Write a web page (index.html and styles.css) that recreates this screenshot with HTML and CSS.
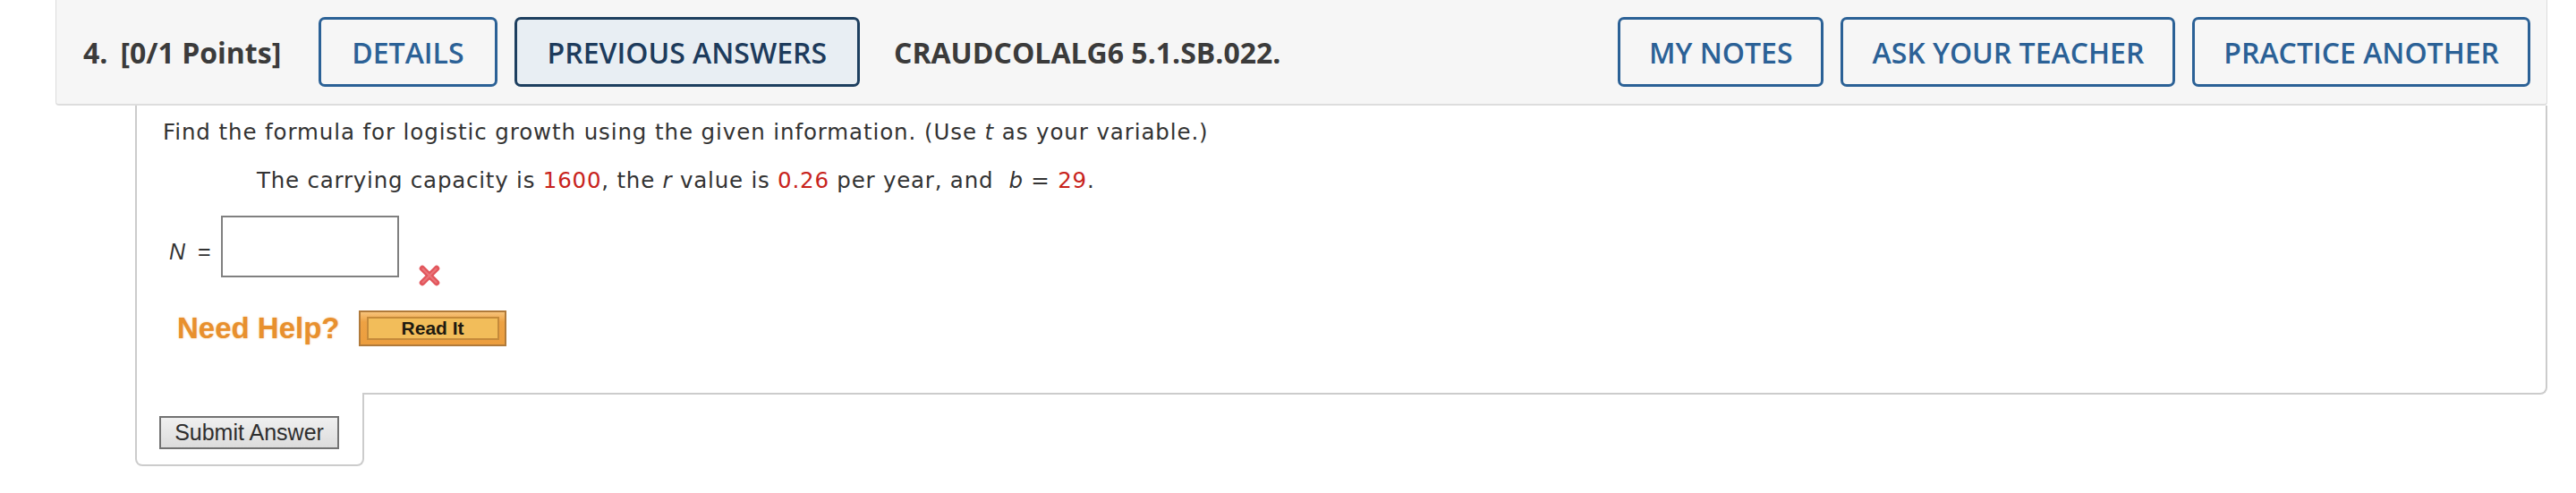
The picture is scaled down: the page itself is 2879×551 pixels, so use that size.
FILE: index.html
```html
<!DOCTYPE html>
<html>
<head>
<meta charset="utf-8">
<link rel="stylesheet" href="styles.css">
</head>
<body>
<div class="question">
  <div class="qhead">
    <span class="qnum">4.</span>
    <span class="qpts">[0/1 Points]</span>
    <span class="btn">DETAILS</span>
    <span class="btn btn-active">PREVIOUS ANSWERS</span>
    <span class="qcode">CRAUDCOLALG6 5.1.SB.022.</span>
    <div class="qtools">
      <span class="btn">MY NOTES</span>
      <span class="btn">ASK YOUR TEACHER</span>
      <span class="btn">PRACTICE ANOTHER</span>
    </div>
  </div>
  <div class="qbody">
    <p class="prompt">Find the formula for logistic growth using the given information. (Use <i>t</i> as your variable.)</p>
    <p class="given">The carrying capacity is <span class="red">1600</span>, the <i>r</i> value is <span class="red">0.26</span> per year, and&nbsp; <i>b</i> = <span class="red">29</span>.</p>
    <div class="answer-row">
      <span class="alabel"><i>N</i>&nbsp; =</span>
      <span class="ainput"></span>
      <svg class="xmark" width="26" height="26" viewBox="0 0 26 26">
        <path d="M5 5 L21 21 M21 5 L5 21" stroke="#e2565c" stroke-width="6.5" stroke-linecap="round" fill="none"/>
        <path d="M5.5 5.5 L20.5 20.5 M20.5 5.5 L5.5 20.5" stroke="#ee8a8d" stroke-width="2" stroke-linecap="round" fill="none" opacity="0.6"/>
      </svg>
    </div>
    <div class="help-row">
      <span class="needhelp">Need Help?</span>
      <span class="readit"><span class="readit-inner">Read It</span></span>
    </div>
  </div>
  <div class="submit-tab">
    <span class="submit-btn">Submit Answer</span>
  </div>
</div>
</body>
</html>
```
FILE: styles.css
```css
html, body {
  margin: 0;
  padding: 0;
  background: #ffffff;
}

.question {
  margin-left: 62px;
  width: 2785px;
}

.qhead {
  box-sizing: border-box;
  height: 118px;
  display: flex;
  align-items: center;
  background: #f6f6f6;
  border: 1px solid #dddddd;
  border-top: none;
  border-bottom: 2px solid #dddddd;
  border-radius: 0 0 4px 4px;
  padding: 0 18px 0 30px;
  font-family: "Open Sans", "DejaVu Sans", sans-serif;
  font-size: 32px;
  color: #3b3b3b;
}

.qnum {
  font-weight: 700;
  margin-right: 14px;
}

.qpts {
  font-weight: 700;
  margin-right: 42px;
}

.btn {
  box-sizing: border-box;
  height: 78px;
  display: inline-flex;
  align-items: center;
  padding: 0 34px;
  border: 3px solid #2b6196;
  border-radius: 7px;
  color: #2b6196;
  font-weight: 600;
  margin-right: 19px;
  white-space: nowrap;
}

.btn-active {
  background: #e8eef3;
  border-color: #1d3f5f;
  color: #1d3b5c;
}

.qcode {
  font-weight: 700;
  margin-left: 19px;
}

.qtools {
  margin-left: auto;
  display: flex;
}

.qtools .btn {
  padding: 0 32px;
}

.qtools .btn:last-child {
  margin-right: 0;
}

.qbody {
  margin-left: 89px;
  border: 2px solid #cccccc;
  border-top: none;
  border-radius: 0 0 8px 0;
  padding: 14px 0 52px 29px;
  font-family: "DejaVu Sans", Verdana, sans-serif;
  font-size: 24.5px;
  letter-spacing: 0.9px;
  line-height: 32px;
  color: #333333;
}

.prompt {
  margin: 0;
}

.given {
  margin: 22px 0 0 105px;
  letter-spacing: 0.78px;
}

.red {
  color: #c8231c;
}

.answer-row {
  display: flex;
  align-items: flex-start;
  margin: 23px 0 0 7px;
  letter-spacing: 0;
}

.alabel {
  font-family: "Liberation Sans", Arial, sans-serif;
  font-size: 25px;
  align-self: center;
  margin-right: 11px;
}

.ainput {
  box-sizing: border-box;
  width: 199px;
  height: 69px;
  border: 2px solid #808080;
  background: #ffffff;
}

.xmark {
  margin: 54px 0 0 21px;
}

.help-row {
  display: flex;
  align-items: center;
  margin: 26px 0 0 16px;
  letter-spacing: 0;
}

.needhelp {
  font-family: "Liberation Sans", Arial, sans-serif;
  font-weight: 700;
  font-size: 33px;
  color: #e8902e;
  text-shadow: 0 0 2px rgba(232, 144, 46, 0.55);
  margin-right: 21px;
  line-height: 40px;
}

.readit {
  box-sizing: border-box;
  width: 165px;
  height: 40px;
  display: flex;
  padding: 5px 6px 5px 7px;
  border: 2px solid #b07a3a;
  background: linear-gradient(#f7c37a, #eda244 30%, #ec9e3e);
}

.readit-inner {
  flex: 1;
  display: flex;
  align-items: center;
  justify-content: center;
  border: 2px solid #c58a3a;
  background: #f2bd5a;
  font-family: "Liberation Sans", Arial, sans-serif;
  font-weight: 700;
  font-size: 21px;
  color: #1e1a10;
}

.submit-tab {
  box-sizing: border-box;
  position: relative;
  width: 256px;
  margin: -2px 0 0 89px;
  border: 2px solid #cccccc;
  border-top: none;
  border-radius: 0 0 8px 8px;
  background: #ffffff;
  padding: 26px 0 17px 25px;
}

.submit-btn {
  box-sizing: border-box;
  display: inline-flex;
  align-items: center;
  justify-content: center;
  width: 201px;
  height: 37px;
  border: 2px solid #727272;
  background: linear-gradient(#f0f0f0, #dcdcdc);
  font-family: "Liberation Sans", Arial, sans-serif;
  font-size: 25px;
  color: #2e2e2e;
}
```
